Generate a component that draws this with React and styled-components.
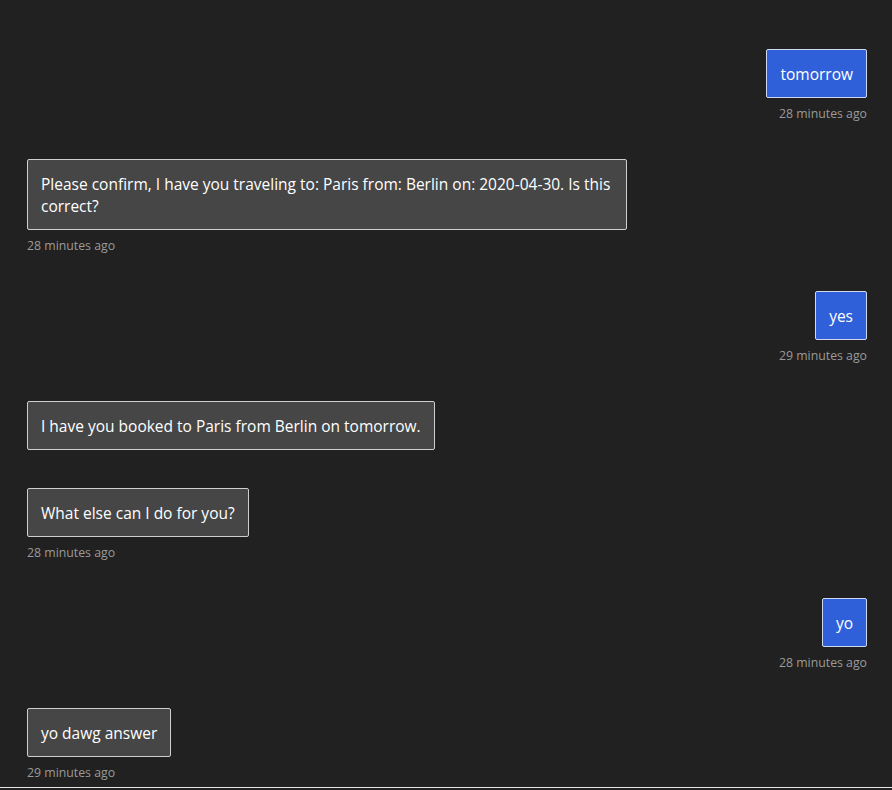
import styled, { createGlobalStyle } from "styled-components";

const messages = [
  { from: "user", text: "tomorrow", time: "28 minutes ago" },
  {
    from: "bot",
    text: "Please confirm, I have you traveling to: Paris from: Berlin on: 2020-04-30. Is this correct?",
    time: "28 minutes ago",
  },
  { from: "user", text: "yes", time: "29 minutes ago" },
  { from: "bot", text: "I have you booked to Paris from Berlin on tomorrow." },
  { from: "bot", text: "What else can I do for you?", time: "28 minutes ago" },
  { from: "user", text: "yo", time: "28 minutes ago" },
  { from: "bot", text: "yo dawg answer", time: "29 minutes ago" },
];

function App() {
  return (
    <>
      <GlobalStyle />
      <Page>
        <Transcript>
          {messages.map((m, i) => (
            <Activity key={i} $from={m.from}>
              <Bubble $from={m.from}>{m.text}</Bubble>
              {m.time && <Timestamp>{m.time}</Timestamp>}
            </Activity>
          ))}
        </Transcript>
        <Footer />
      </Page>
    </>
  );
}

const GlobalStyle = createGlobalStyle`
  html, body {
    margin: 0;
    padding: 0;
    background: #212121;
  }
  body {
    font-family: "Open Sans", "Noto Sans", sans-serif;
  }
`;

const Page = styled.div`
  height: 790px;
  display: flex;
  flex-direction: column;
  overflow: hidden;
  background: #212121;
`;

const Transcript = styled.div`
  flex: 1;
  display: flex;
  flex-direction: column;
  gap: 38px;
  padding: 49px 25px 0 27px;
`;

const Activity = styled.div`
  display: flex;
  flex-direction: column;
  align-items: ${(p) => (p.$from === "user" ? "flex-end" : "flex-start")};
`;

const Bubble = styled.div`
  box-sizing: border-box;
  max-width: 600px;
  padding: 13px 13px 12px;
  font-size: 15.5px;
  line-height: 22px;
  color: #ffffff;
  background: ${(p) => (p.$from === "user" ? "#2f5fd9" : "#464646")};
  border: 1px solid ${(p) => (p.$from === "user" ? "#d0d8f0" : "#cfcfcf")};
  border-radius: 2px;
`;

const Timestamp = styled.div`
  margin-top: 8px;
  font-size: 12.3px;
  line-height: 15px;
  height: 15px;
  color: #9a9a9a;
`;

const Footer = styled.div`
  flex: 0 0 2px;
  border-top: 1px solid #e6e6e6;
  margin-top: auto;
`;

export default App;
